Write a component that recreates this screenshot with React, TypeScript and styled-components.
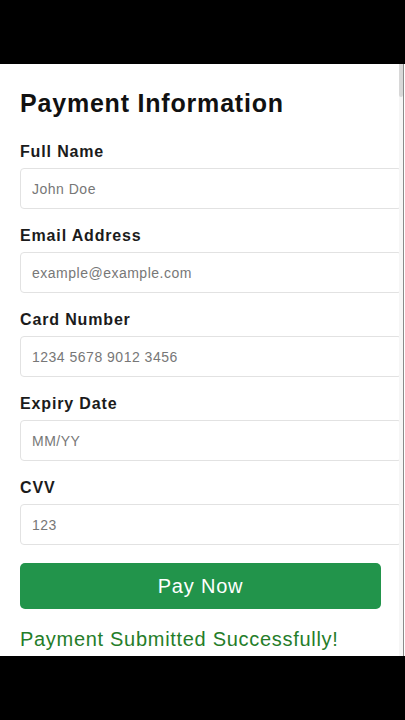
import React from "react";
import styled, { createGlobalStyle } from "styled-components";

const GlobalStyle = createGlobalStyle`
  html, body {
    margin: 0;
    padding: 0;
    background: #000;
  }
  body {
    font-family: "Liberation Sans", Arial, sans-serif;
  }
  * { box-sizing: border-box; }
`;

const Page = styled.div`
  width: 405px;
  height: 720px;
  background: #000;
  padding-top: 64px;
`;

const Panel = styled.div`
  position: relative;
  width: 405px;
  height: 592px;
  background: #fff;
  overflow: hidden;
  padding: 24px 0 0 20px;
`;

const Form = styled.form`
  width: 361px;
  display: flex;
  flex-direction: column;
`;

const Title = styled.h2`
  margin: 0 0 24px 0;
  font-size: 25px;
  line-height: 30px;
  letter-spacing: 0.8px;
  font-weight: 700;
  color: #111;
`;

const Field = styled.div`
  display: flex;
  flex-direction: column;
  margin-bottom: 17px;
`;

const Label = styled.label`
  font-size: 16px;
  line-height: 20px;
  letter-spacing: 0.85px;
  font-weight: 700;
  color: #1b1b1b;
  margin-bottom: 6px;
`;

const Input = styled.input`
  width: calc(100% + 21px);
  height: 41px;
  padding: 0 10px 0 11px;
  border: 1px solid #e2e2e2;
  border-radius: 4px;
  background: #fff;
  font-family: "Liberation Sans", Arial, sans-serif;
  font-size: 14px;
  letter-spacing: 0.5px;
  color: #333;
  outline: none;
  &::placeholder {
    color: #777;
  }
`;

const PayButton = styled.button`
  margin-top: 1px;
  width: 361px;
  height: 46px;
  border: none;
  border-radius: 5px;
  background: #22944b;
  color: #fff;
  font-family: "Liberation Sans", Arial, sans-serif;
  font-size: 20px;
  letter-spacing: 0.8px;
  cursor: pointer;
`;

const Success = styled.p`
  margin: 18px 0 0 0;
  font-size: 20px;
  line-height: 24px;
  letter-spacing: 0.7px;
  color: #257d29;
  white-space: nowrap;
`;

const ScrollTrack = styled.div`
  position: absolute;
  top: 0;
  right: 1px;
  width: 5px;
  height: 100%;
  border-right: 1px solid #8a8a8a;
  background: #f6f6f6;
`;

const ScrollThumb = styled.div`
  width: 4px;
  height: 33px;
  background: #d8d8d8;
  border-radius: 0 0 2px 2px;
`;

const fields = [
  { id: "name", label: "Full Name", placeholder: "John Doe" },
  { id: "email", label: "Email Address", placeholder: "example@example.com" },
  { id: "card", label: "Card Number", placeholder: "1234 5678 9012 3456" },
  { id: "expiry", label: "Expiry Date", placeholder: "MM/YY" },
  { id: "cvv", label: "CVV", placeholder: "123" },
];

export default function App() {
  return (
    <>
      <GlobalStyle />
      <Page>
        <Panel>
          <Form onSubmit={(e) => e.preventDefault()}>
            <Title>Payment Information</Title>
            {fields.map((f) => (
              <Field key={f.id}>
                <Label htmlFor={f.id}>{f.label}</Label>
                <Input id={f.id} placeholder={f.placeholder} />
              </Field>
            ))}
            <PayButton type="submit">Pay Now</PayButton>
            <Success>Payment Submitted Successfully!</Success>
          </Form>
          <ScrollTrack>
            <ScrollThumb />
          </ScrollTrack>
        </Panel>
      </Page>
    </>
  );
}
